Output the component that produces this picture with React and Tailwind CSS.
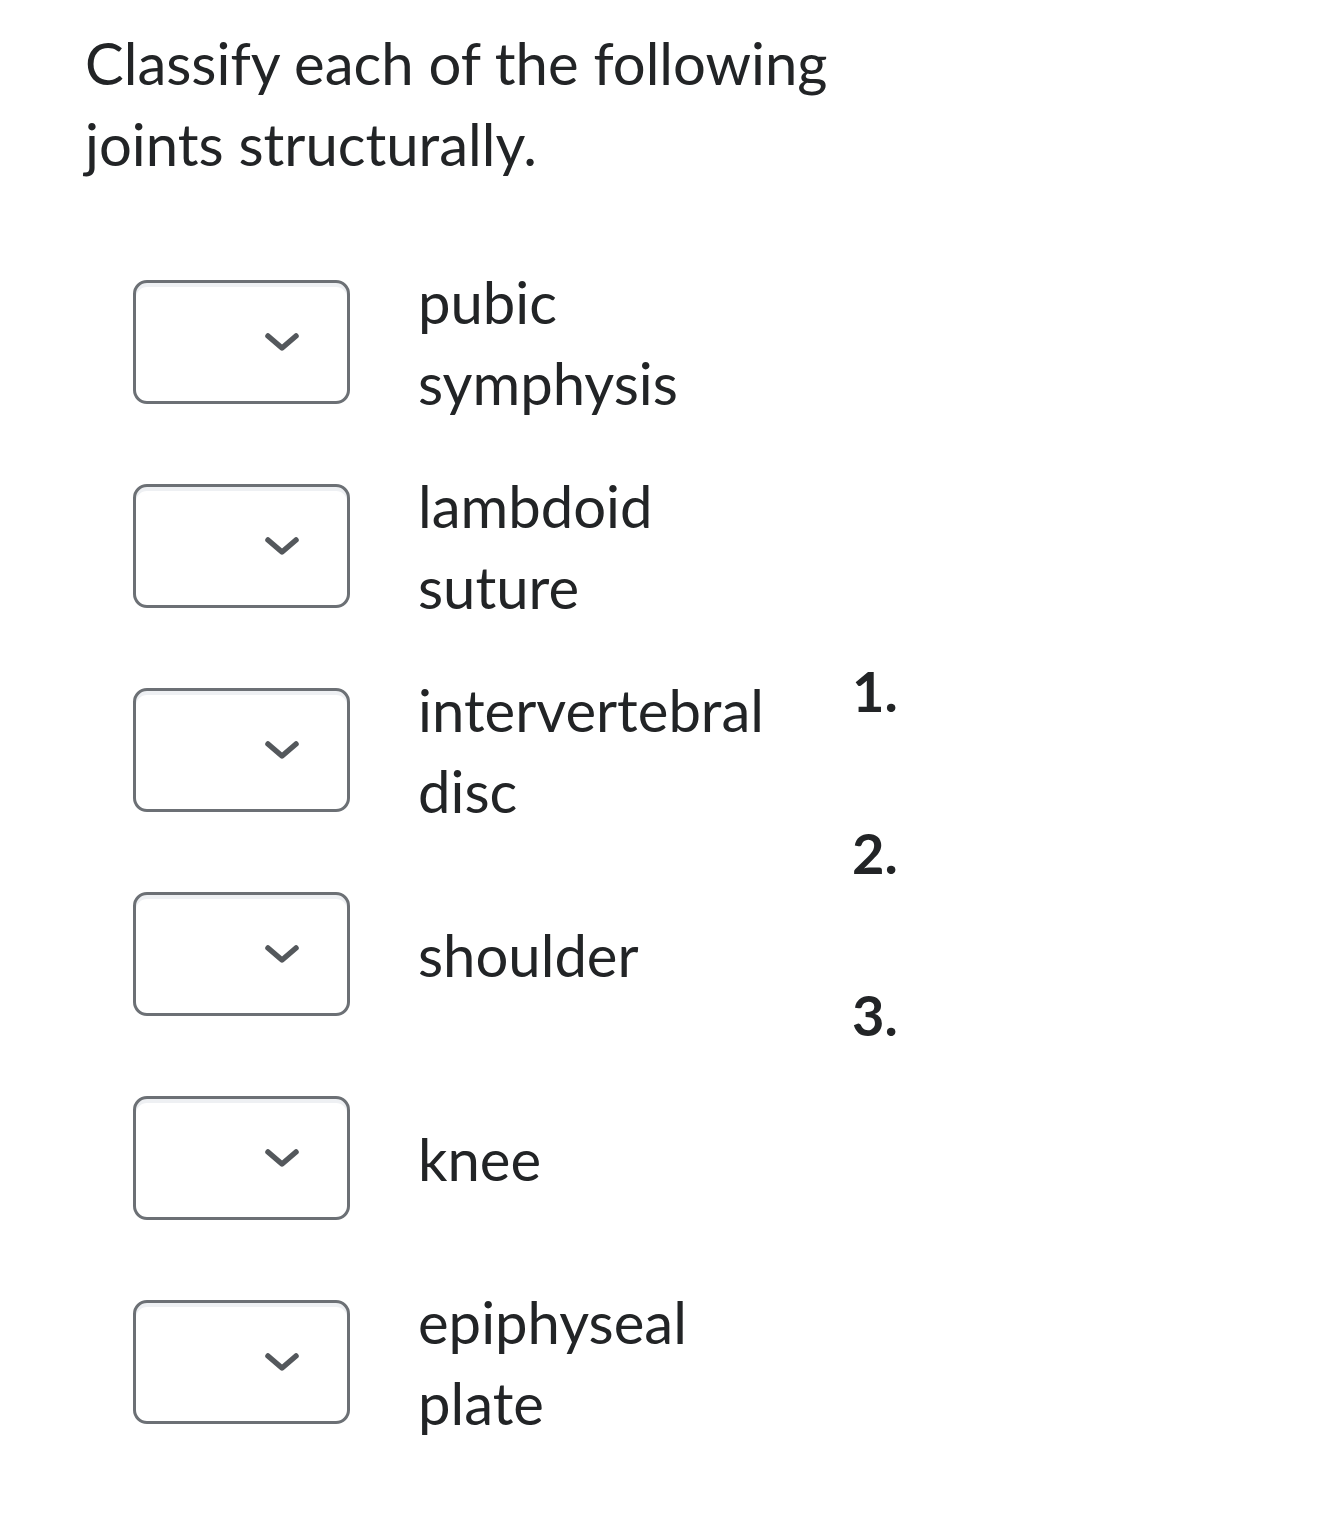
import React from 'react';

const joints = [
    ['pubic', 'symphysis'],
    ['lambdoid', 'suture'],
    ['intervertebral', 'disc'],
    ['shoulder'],
    ['knee'],
    ['epiphyseal', 'plate'],
];

const Chevron = () => (
    <svg width="36" height="20" viewBox="0 0 36 20" fill="none">
        <polyline points="4,4 18,16 32,4" stroke="#54585c" strokeWidth="5.5" strokeLinecap="round" strokeLinejoin="round" />
    </svg>
);

const SelectBox = () => (
    <div className="w-[217px] h-[124px] shrink-0 rounded-[14px] border-[3px] border-[#6c7075] bg-white shadow-[inset_0_4px_0_#eef0f3] flex items-center justify-end pr-[47px]">
        <Chevron />
    </div>
);

const App = () => {
    return (
        <div className="min-h-[1524px] bg-white text-[#222426] pt-[22px] px-[85px]" style={{ fontFamily: 'Lato, "Noto Sans", sans-serif' }}>
            <h1 className="text-[58px] leading-[81px] font-normal">
                Classify each of the following
                <br />
                joints structurally.
            </h1>
            <div className="mt-[76px] flex items-center">
                <div className="ml-[48px] flex flex-col gap-[40px]">
                    {joints.map((lines, i) => (
                        <div key={i} className="h-[164px] flex items-center">
                            <SelectBox />
                            <div className="ml-[68px] w-[434px] shrink-0 text-[58px] leading-[81px]">
                                {lines.map((l) => (
                                    <div key={l}>{l}</div>
                                ))}
                            </div>
                        </div>
                    ))}
                </div>
                <ol className="flex flex-col gap-[81px] text-[56px] leading-[81px] font-bold">
                    <li>1.</li>
                    <li>2.</li>
                    <li>3.</li>
                </ol>
            </div>
        </div>
    );
};

export default App;
